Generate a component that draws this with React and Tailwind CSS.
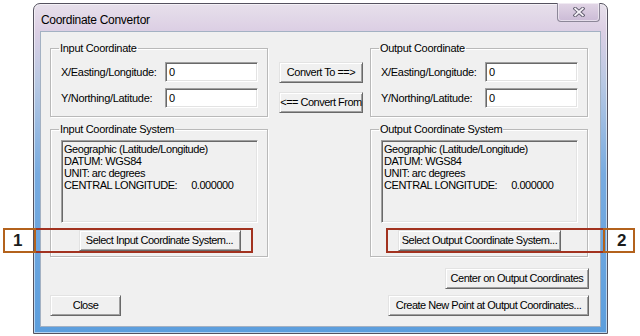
import React from 'react';

const Btn = ({ children, className = '' }) => (
  <button
    className={`h-[21px] whitespace-nowrap tracking-[-0.5px] bg-[#f0f0f0] border border-t-[#e3e3e3] border-l-[#e3e3e3] border-r-[#696969] border-b-[#696969] shadow-[inset_1px_1px_0_#ffffff,inset_-1px_-1px_0_#a0a0a0] text-center leading-[19px] ${className}`}
  >
    {children}
  </button>
);

const Field = ({ label }) => (
  <div className="flex items-center justify-between h-[20px]">
    <span>{label}</span>
    <div className="w-[93px] h-[20px] bg-white border border-t-[#a0a0a0] border-l-[#a0a0a0] border-r-white border-b-white shadow-[inset_1px_1px_0_#696969,inset_-1px_-1px_0_#e3e3e3] pl-[3px] leading-[18px]">
      0
    </div>
  </div>
);

const Group = ({ title, children, className = '' }) => (
  <fieldset
    className={`w-[218px] border border-[#b9b9b9] shadow-[inset_1px_1px_0_#ffffff,1px_1px_0_#ffffff] pl-[10px] pr-[9px] ${className}`}
  >
    <legend className="-ml-[2px] px-[1px] leading-[13px]">{title}</legend>
    {children}
  </fieldset>
);

const SystemInfo = () => (
  <div className="h-[83px] bg-[#f0f0f0] border border-t-[#a0a0a0] border-l-[#a0a0a0] border-r-white border-b-white shadow-[inset_1px_1px_0_#696969,inset_-1px_-1px_0_#e3e3e3] pl-[2px] pt-[2px] leading-[12px] tracking-[-0.45px]">
    <div>Geographic (Latitude/Longitude)</div>
    <div>DATUM: WGS84</div>
    <div>UNIT: arc degrees</div>
    <div>
      CENTRAL LONGITUDE:<span className="ml-[14px]">0.000000</span>
    </div>
  </div>
);

const CloseGlyph = () => (
  <svg width="12" height="10" viewBox="0 0 12 10">
    <path d="M2.2 1.6 L9.8 8.4 M9.8 1.6 L2.2 8.4" stroke="#5f5a6c" strokeWidth="3.6" strokeLinecap="square" />
    <path d="M2.2 1.6 L9.8 8.4 M9.8 1.6 L2.2 8.4" stroke="#f6f2f8" strokeWidth="1.8" strokeLinecap="square" />
  </svg>
);

export default function App() {
  return (
    <div className="relative w-[640px] h-[336px] overflow-hidden bg-white text-black text-[11px] tracking-[-0.3px] font-['Liberation_Sans',Arial,sans-serif]">
      {/* window */}
      <div className="ml-[33px] mt-[3px] w-[575px] h-[331px] flex flex-col px-[6px] pb-[6px] rounded-t-[7px] border border-[#55525f] bg-[linear-gradient(180deg,#e7e0eb_0px,#dccfe4_26px,#b7c8e3_80px,#78abe0_170px,#5c9edd_100%)] shadow-[inset_0_0_0_1px_rgba(255,255,255,0.55)]">
        {/* title bar */}
        <div className="h-[27px] flex items-start justify-between">
          <span className="text-[12px] mt-[7px] pl-[1px]">Coordinate Convertor</span>
          <div className="-mt-[1px] mr-[1px] w-[43px] h-[19px] flex items-center justify-center rounded-b-[4px] border border-t-0 border-[#8c8798] bg-[linear-gradient(180deg,#e2d6e6,#cbbbd6)] shadow-[inset_0_0_0_1px_rgba(255,255,255,0.5)]">
            <CloseGlyph />
          </div>
        </div>

        {/* client area */}
        <div className="flex-1 bg-[#f0f0f0] border border-[#a3b1c3] pl-[9px] pt-[10px]">
          {/* coordinates row */}
          <div className="flex items-start">
            <Group title="Input Coordinate" className="pb-[8px]">
              <div className="pt-[7px] flex flex-col gap-[6px]">
                <Field label="X/Easting/Longitude:" />
                <Field label="Y/Northing/Latitude:" />
              </div>
            </Group>
            <div className="ml-[11px] pt-[20px] flex flex-col gap-[9px]">
              <Btn className="w-[84px]">Convert To ==&gt;</Btn>
              <Btn className="w-[84px]">&lt;== Convert From</Btn>
            </div>
            <Group title="Output Coordinate" className="ml-[7px] pb-[8px]">
              <div className="pt-[7px] flex flex-col gap-[6px]">
                <Field label="X/Easting/Longitude:" />
                <Field label="Y/Northing/Latitude:" />
              </div>
            </Group>
          </div>

          {/* coordinate systems row */}
          <div className="mt-[6px] flex items-start">
            <Group title="Input Coordinate System" className="pb-[5px]">
              <div className="pt-[4px]">
                <SystemInfo />
              </div>
              <div className="mt-[7px] flex justify-center">
                <Btn className="w-[162px]">Select Input Coordinate System...</Btn>
              </div>
            </Group>
            <Group title="Output Coordinate System" className="ml-[102px] pb-[5px]">
              <div className="pt-[4px]">
                <SystemInfo />
              </div>
              <div className="mt-[7px] flex justify-center">
                <Btn className="w-[163px]">Select Output Coordinate System...</Btn>
              </div>
            </Group>
          </div>

          {/* bottom buttons */}
          <div className="mt-[11px] flex items-end justify-between">
            <Btn className="w-[71px]">Close</Btn>
            <div className="mr-[11px] flex flex-col items-end gap-[6px]">
              <Btn className="w-[144px]">Center on Output Coordinates</Btn>
              <Btn className="w-[201px]">Create New Point at Output Coordinates...</Btn>
            </div>
          </div>
        </div>
      </div>

      {/* callout 1 */}
      <div className="absolute left-[3px] top-[228px] w-[250px] h-[25px] border-2 border-[#a2321f]" />
      <div className="absolute left-[3px] top-[228px] w-[33px] h-[25px] border-2 border-[#b3621c] pl-[8px] text-[17px] font-bold leading-[21px] tracking-normal text-[#1c1c1c]">
        1
      </div>

      {/* callout 2 */}
      <div className="absolute left-[386px] top-[228px] w-[249px] h-[25px] border-2 border-[#a2321f]" />
      <div className="absolute left-[603px] top-[228px] w-[32px] h-[25px] border-2 border-[#b3621c] pl-[12px] text-[17px] font-bold leading-[21px] tracking-normal text-[#1c1c1c]">
        2
      </div>
    </div>
  );
}
